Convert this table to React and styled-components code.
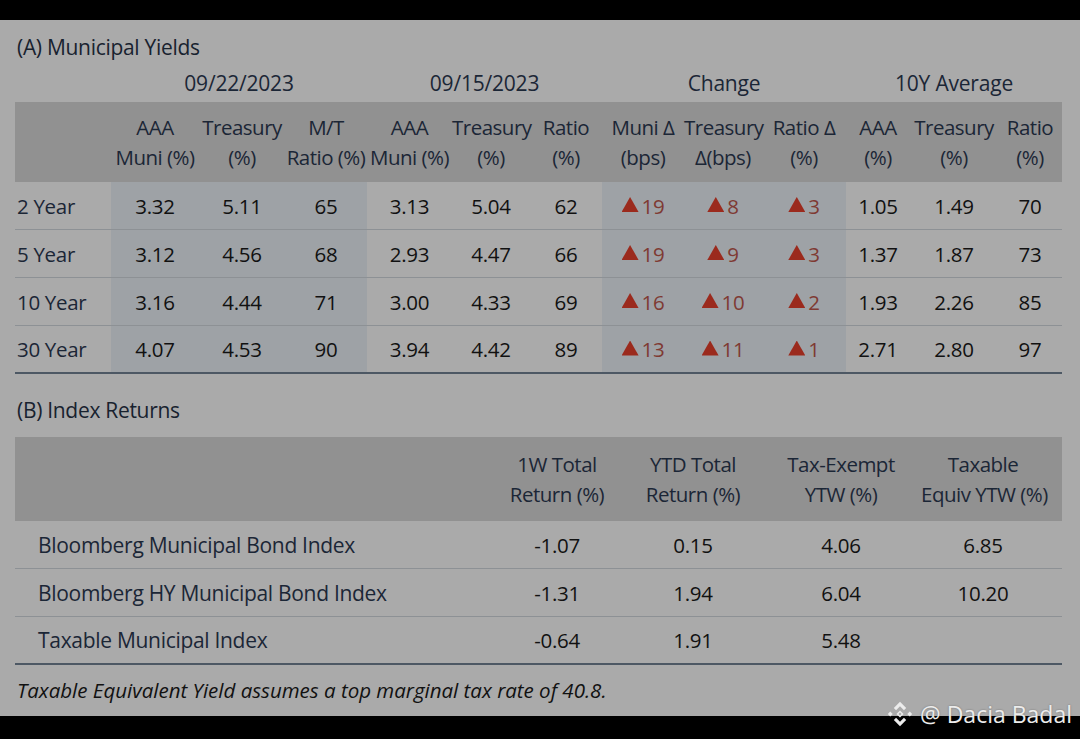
import React from 'react';
import styled, { createGlobalStyle } from 'styled-components';

const GlobalStyle = createGlobalStyle`
  html, body {
    margin: 0;
    padding: 0;
    background: #000;
  }
  body {
    font-family: 'Open Sans', 'Noto Sans', sans-serif;
  }
`;

const yieldCols = '96px 88px 86px 82px 85px 78px 72px 82px 78px 84px 64px 88px 64px';
const indexCols = '474px 136px 136px 160px 124px';

const Screen = styled.div`
  width: 1080px;
  height: 739px;
  display: flex;
  flex-direction: column;
  position: relative;
  overflow: hidden;
  background: #000;
`;

const Bar = styled.div`
  height: ${p => p.$h}px;
  flex: none;
  background: #000;
`;

const Sheet = styled.div`
  flex: 1;
  background: #aaaaaa;
  padding: 15px 18px 0 15px;
  color: #1b2636;
`;

const SectionTitle = styled.div`
  font-size: 21px;
  line-height: 24px;
  height: 24px;
  padding-left: 2px;
  letter-spacing: -0.3px;
  color: #18222f;
  margin-top: ${p => p.$top || 0}px;
`;

const Grid = styled.div`
  display: grid;
  grid-template-columns: ${p => p.$cols};
`;

const DateRow = styled(Grid)`
  height: 43px;
  align-items: end;
  padding-bottom: 7px;
  box-sizing: border-box;
`;

const DateCell = styled.div`
  grid-column: span ${p => p.$span || 1};
  text-align: center;
  font-size: 21px;
  line-height: 24px;
  letter-spacing: -0.2px;
  color: #1b2636;
`;

const HeadRow = styled(Grid)`
  background: #919191;
  padding: ${p => p.$pad}px ${p => p.$right || 0}px ${p => p.$pad}px 0;
  height: ${p => p.$h}px;
  box-sizing: border-box;
`;

const HeadCell = styled.div`
  text-align: center;
  font-size: 20.5px;
  line-height: 30px;
  letter-spacing: -0.5px;
  white-space: nowrap;
  color: #1b2636;
`;

const DataRow = styled(Grid)`
  height: 48px;
  box-sizing: border-box;
  border-bottom: ${p => (p.$last ? '2px solid #4d5864' : '1px solid #8d9195')};
  padding-right: ${p => p.$right || 0}px;
`;

const Cell = styled.div`
  display: flex;
  align-items: center;
  justify-content: ${p => (p.$left ? 'flex-start' : 'center')};
  padding-left: ${p => p.$indent || 0}px;
  background: ${p => (p.$shade ? '#9ea2a6' : 'transparent')};
  font-size: ${p => (p.$big ? 21 : 20.5)}px;
  letter-spacing: -0.3px;
  white-space: nowrap;
  color: ${p => (p.$label ? '#1b2636' : '#111')};
`;

const Up = styled.span`
  display: inline-flex;
  align-items: center;
  gap: 3px;
  color: #7f3a33;
`;

const Tri = styled.span`
  width: 17px;
  height: 15px;
  background: #9b2a1d;
  clip-path: polygon(50% 0, 100% 100%, 0 100%);
  margin-top: -2px;
`;

const Note = styled.div`
  font-size: 20.5px;
  line-height: 24px;
  font-style: italic;
  letter-spacing: 0px;
  padding-left: 2px;
  margin-top: 13px;
  color: #111;
`;

const Watermark = styled.div`
  position: absolute;
  right: 8px;
  top: 698px;
  display: flex;
  align-items: center;
  gap: 5px;
  color: #ececec;
  font-size: 23px;
  font-family: 'Open Sans', 'Noto Sans', sans-serif;
  text-shadow: 0 0 2px rgba(0, 0, 0, 0.35);
`;

const groups = ['09/22/2023', '09/15/2023', 'Change', '10Y Average'];

const yieldHeads = [
  ['', ''],
  ['AAA', 'Muni (%)'],
  ['Treasury', '(%)'],
  ['M/T', 'Ratio (%)'],
  ['AAA', 'Muni (%)'],
  ['Treasury', '(%)'],
  ['Ratio', '(%)'],
  ['Muni Δ', '(bps)'],
  ['Treasury', 'Δ(bps)'],
  ['Ratio Δ', '(%)'],
  ['AAA', '(%)'],
  ['Treasury', '(%)'],
  ['Ratio', '(%)'],
];

const yields = [
  ['2 Year', '3.32', '5.11', '65', '3.13', '5.04', '62', 19, 8, 3, '1.05', '1.49', '70'],
  ['5 Year', '3.12', '4.56', '68', '2.93', '4.47', '66', 19, 9, 3, '1.37', '1.87', '73'],
  ['10 Year', '3.16', '4.44', '71', '3.00', '4.33', '69', 16, 10, 2, '1.93', '2.26', '85'],
  ['30 Year', '4.07', '4.53', '90', '3.94', '4.42', '89', 13, 11, 1, '2.71', '2.80', '97'],
];

const indexHeads = [
  ['', ''],
  ['1W Total', 'Return (%)'],
  ['YTD Total', 'Return (%)'],
  ['Tax-Exempt', 'YTW (%)'],
  ['Taxable', 'Equiv YTW (%)'],
];

const indexes = [
  ['Bloomberg Municipal Bond Index', '-1.07', '0.15', '4.06', '6.85'],
  ['Bloomberg HY Municipal Bond Index', '-1.31', '1.94', '6.04', '10.20'],
  ['Taxable Municipal Index', '-0.64', '1.91', '5.48', ''],
];

const shaded = i => (i >= 1 && i <= 3) || (i >= 7 && i <= 9);

function BinanceMark() {
  return (
    <svg width="30" height="30" viewBox="0 0 32 32" fill="#ececec">
      <path d="M16 3 L9.4 9.6 L11.8 12 L16 7.8 L20.2 12 L22.6 9.6 Z" />
      <path d="M16 29 L9.4 22.4 L11.8 20 L16 24.2 L20.2 20 L22.6 22.4 Z" />
      <path d="M3 16 L5.6 13.4 L8.2 16 L5.6 18.6 Z" />
      <path d="M29 16 L26.4 13.4 L23.8 16 L26.4 18.6 Z" />
      <path d="M16 12.2 L19.8 16 L16 19.8 L12.2 16 Z M16 14.4 L14.4 16 L16 17.6 L17.6 16 Z" fillRule="evenodd" />
    </svg>
  );
}

export default function App() {
  return (
    <Screen>
      <GlobalStyle />
      <Bar $h={20} />
      <Sheet>
        <SectionTitle>(A) Municipal Yields</SectionTitle>
        <DateRow $cols={yieldCols}>
          <div />
          {groups.map(g => (
            <DateCell key={g} $span={3}>{g}</DateCell>
          ))}
        </DateRow>
        <HeadRow $cols={yieldCols} $pad={10} $h={80}>
          {yieldHeads.map((h, i) => (
            <HeadCell key={i}>
              {h[0]}
              <br />
              {h[1]}
            </HeadCell>
          ))}
        </HeadRow>
        {yields.map((r, ri) => (
          <DataRow key={r[0]} $cols={yieldCols} $last={ri === yields.length - 1}>
            {r.map((v, i) => (
              <Cell key={i} $shade={shaded(i)} $left={i === 0} $label={i === 0} $indent={i === 0 ? 2 : 0}>
                {typeof v === 'number' ? (
                  <Up>
                    <Tri />
                    {v}
                  </Up>
                ) : (
                  v
                )}
              </Cell>
            ))}
          </DataRow>
        ))}

        <SectionTitle $top={24}>(B) Index Returns</SectionTitle>
        <HeadRow $cols={indexCols} $pad={12} $h={84} $right={17} style={{ marginTop: 15 }}>
          {indexHeads.map((h, i) => (
            <HeadCell key={i}>
              {h[0]}
              <br />
              {h[1]}
            </HeadCell>
          ))}
        </HeadRow>
        {indexes.map((r, ri) => (
          <DataRow key={r[0]} $cols={indexCols} $right={17} $last={ri === indexes.length - 1}>
            {r.map((v, i) => (
              <Cell key={i} $big={i === 0} $left={i === 0} $label={i === 0} $indent={i === 0 ? 23 : 0}>
                {v}
              </Cell>
            ))}
          </DataRow>
        ))}
        <Note>Taxable Equivalent Yield assumes a top marginal tax rate of 40.8.</Note>
      </Sheet>
      <Bar $h={23} />
      <Watermark>
        <BinanceMark />
        <span>@ Dacia Badal</span>
      </Watermark>
    </Screen>
  );
}
